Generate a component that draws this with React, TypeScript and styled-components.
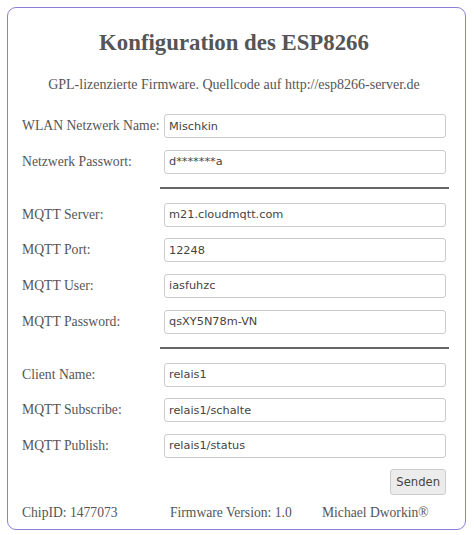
import styled, { createGlobalStyle } from 'styled-components'

const GlobalStyle = createGlobalStyle`
  html, body {
    margin: 0;
    padding: 0;
    background: #fff;
  }
  body {
    font-family: 'Liberation Serif', Georgia, serif;
    color: #555;
  }
`

const Page = styled.div`
  padding: 7px 8px 9px 7px;
`

const Card = styled.form`
  border: 1.5px solid #8a80d8;
  border-radius: 9px;
  padding: 0 19px 8px 14px;
`

const Title = styled.h1`
  margin: 0;
  padding-top: 20px;
  text-align: center;
  font-size: 22.8px;
  font-weight: bold;
  color: #555;
  line-height: 30px;
`

const Subtitle = styled.p`
  margin: 0;
  padding-top: 18px;
  text-align: center;
  font-size: 14px;
  line-height: 18px;
`

const Fields = styled.div`
  display: grid;
  grid-template-columns: 142px 1fr;
  row-gap: 11.6px;
  align-items: center;
  margin-top: 20px;
`

const Label = styled.label`
  font-size: 13.7px;
  white-space: nowrap;
`

const Input = styled.input`
  box-sizing: border-box;
  height: 24px;
  width: 100%;
  border: 1px solid #ccc;
  border-radius: 3px;
  padding: 0 4px;
  font-family: 'DejaVu Sans', Verdana, sans-serif;
  font-size: 11.3px;
  color: #444;
  background: #fff;
`

const Rule = styled.div`
  grid-column: 2;
  height: 6px;
  display: flex;
  align-items: center;
  margin: 0 -3px 0 -4px;
  &::before {
    content: '';
    flex: 1;
    height: 2px;
    background: #666;
  }
`

const Actions = styled.div`
  display: flex;
  justify-content: flex-end;
  margin-top: 11px;
`

const Button = styled.button`
  height: 26px;
  padding: 0 5px;
  border: 1px solid #ccc;
  border-radius: 3px;
  background: #ececec;
  font-family: 'DejaVu Sans', Verdana, sans-serif;
  font-size: 11.6px;
  color: #444;
`

const Footer = styled.div`
  display: grid;
  grid-template-columns: 148px 152px auto;
  font-size: 13.6px;
  margin-top: 10px;
  line-height: 16px;
`

const fields: ([string, string] | null)[] = [
  ['WLAN Netzwerk Name:', 'Mischkin'],
  ['Netzwerk Passwort:', 'd*******a'],
  null,
  ['MQTT Server:', 'm21.cloudmqtt.com'],
  ['MQTT Port:', '12248'],
  ['MQTT User:', 'iasfuhzc'],
  ['MQTT Password:', 'qsXY5N78m-VN'],
  null,
  ['Client Name:', 'relais1'],
  ['MQTT Subscribe:', 'relais1/schalte'],
  ['MQTT Publish:', 'relais1/status'],
]

export default function App() {
  return (
    <>
      <GlobalStyle />
      <Page>
        <Card onSubmit={(e) => e.preventDefault()}>
          <Title>Konfiguration des ESP8266</Title>
          <Subtitle>
            GPL-lizenzierte Firmware. Quellcode auf http://esp8266-server.de
          </Subtitle>
          <Fields>
            {fields.map((f, i) =>
              f ? (
                <>
                  <Label key={`l${i}`}>{f[0]}</Label>
                  <Input key={`i${i}`} defaultValue={f[1]} />
                </>
              ) : (
                <Rule key={`r${i}`} />
              )
            )}
          </Fields>
          <Actions>
            <Button type="submit">Senden</Button>
          </Actions>
          <Footer>
            <span>ChipID: 1477073</span>
            <span>Firmware Version: 1.0</span>
            <span>Michael Dworkin®</span>
          </Footer>
        </Card>
      </Page>
    </>
  )
}
